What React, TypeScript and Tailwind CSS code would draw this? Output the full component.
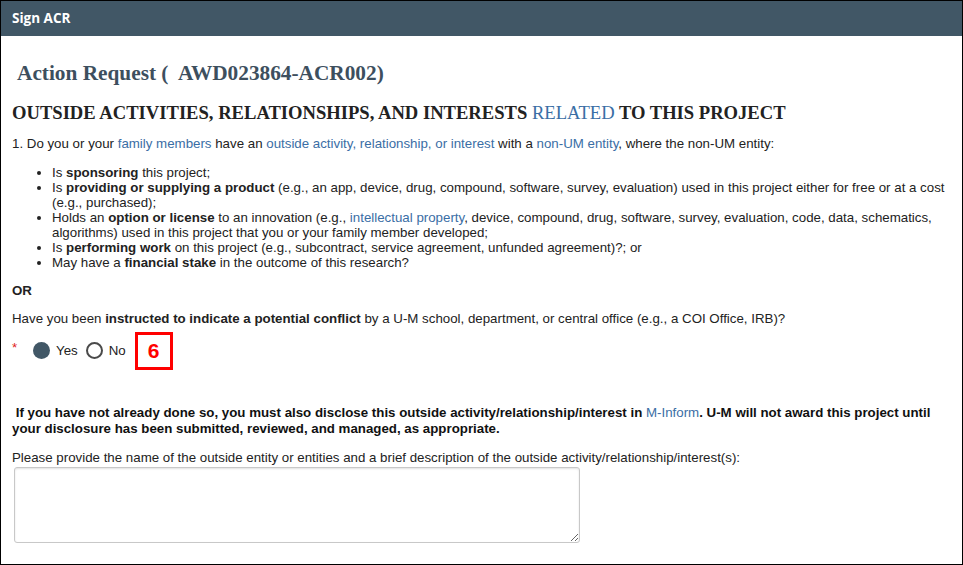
import React from 'react';

const link = 'text-[#3a6ea5]';

export default function App() {
  return (
    <div className="w-[963px] h-[565px] border border-black overflow-hidden bg-white font-['Liberation_Sans',Arial,sans-serif] text-[13.3px] text-[#222]">
      {/* title bar */}
      <div className="h-[35px] bg-[#415766] flex items-center px-[11px]">
        <span className="text-white font-bold text-[13.5px] font-['Open_Sans',sans-serif]">Sign ACR</span>
      </div>

      <div className="px-[11px]">
        <h1 className="mt-[24px] ml-[5px] font-['Liberation_Serif',serif] font-bold text-[21.3px] leading-[26px] text-[#3d4f5e]">
          Action Request (&nbsp; AWD023864-ACR002)
        </h1>

        <h2 className="mt-[16px] font-['Liberation_Serif',serif] font-bold text-[18.6px] leading-[22px] text-[#222]">
          OUTSIDE ACTIVITIES, RELATIONSHIPS, AND INTERESTS <span className={`${link} font-normal`}>RELATED</span> TO THIS PROJECT
        </h2>

        <p className="mt-[12px] leading-[15px]">
          1. Do you or your <span className={link}>family members</span> have an{' '}
          <span className={link}>outside activity, relationship, or interest</span> with a{' '}
          <span className={link}>non-UM entity</span>, where the non-UM entity:
        </p>

        <ul className="mt-[14px] ml-[40px] pr-[2px] list-disc leading-[15px]">
          <li>Is <b>sponsoring</b> this project;</li>
          <li>
            Is <b>providing or supplying a product</b> (e.g., an app, device, drug, compound, software, survey, evaluation) used in this project either for free or at a cost (e.g., purchased);
          </li>
          <li>
            Holds an <b>option or license</b> to an innovation (e.g., <span className={link}>intellectual property</span>, device, compound, drug, software, survey, evaluation, code, data, schematics, algorithms) used in this project that you or your family member developed;
          </li>
          <li>
            Is <b>performing work</b> on this project (e.g., subcontract, service agreement, unfunded agreement)?; or
          </li>
          <li>
            May have a <b>financial stake</b> in the outcome of this research?
          </li>
        </ul>

        <p className="mt-[13px] font-bold leading-[15px]">OR</p>

        <p className="mt-[13px] leading-[15px]">
          Have you been <b>instructed to indicate a potential conflict</b> by a U-M school, department, or central office (e.g., a COI Office, IRB)?
        </p>

        <div className="mt-[6px] flex items-center h-[37px]">
          <span className="text-[#e0201b] w-[21px] -mt-[5px]">*</span>
          <span className="w-[17px] h-[17px] rounded-full bg-[#415766]" />
          <span className="ml-[6px]">Yes</span>
          <span className="ml-[8px] w-[17px] h-[17px] rounded-full border-2 border-[#4a4a4a] bg-white" />
          <span className="ml-[6px]">No</span>
          <span className="ml-[9px] w-[38px] h-[38px] border-[3px] border-[#ff0000] flex items-center justify-center text-[#ff0000] font-bold text-[21px]">
            6
          </span>
        </div>

        <p className="mt-[36px] font-bold leading-[16px] text-[#111]">
          &nbsp;If you have not already done so, you must also disclose this outside activity/relationship/interest in{' '}
          <span className={`${link} font-normal`}>M-Inform</span>. U-M will not award this project until your disclosure has been submitted, reviewed, and managed, as appropriate.
        </p>

        <p className="mt-[13px] leading-[15px]">
          Please provide the name of the outside entity or entities and a brief description of the outside activity/relationship/interest(s):
        </p>

        <textarea className="mt-[2px] ml-[2px] block w-[566px] h-[76px] border border-[#c8c8c8] rounded-[3px] shadow-[inset_0_1px_2px_rgba(0,0,0,0.12)] resize-y" />
      </div>
    </div>
  );
}
